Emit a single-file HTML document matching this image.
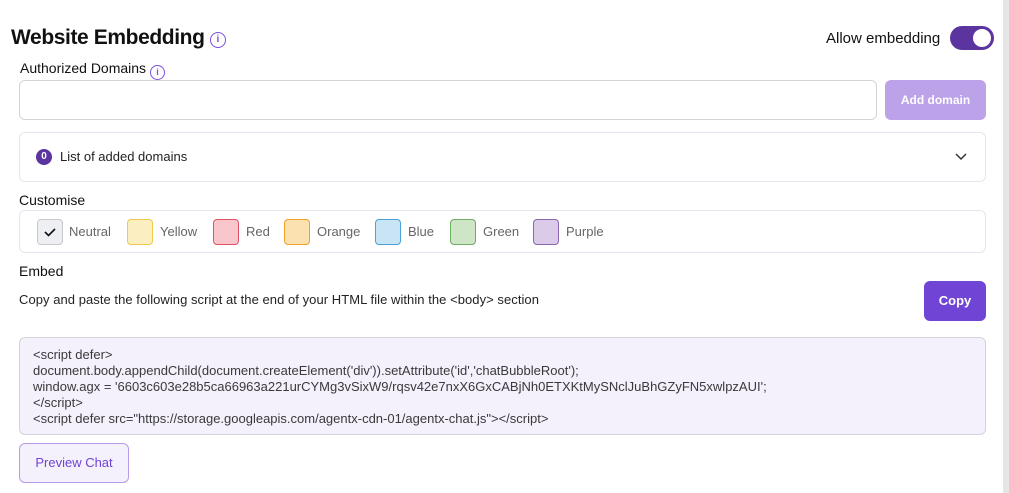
<!DOCTYPE html><html><head><style>
body{margin:0;width:1009px;height:493px;background:#fff;font-family:"Liberation Sans",sans-serif;position:relative;overflow:hidden;color:#1a1a2e}
.a{position:absolute}
.sb{right:0;top:0;width:6px;height:493px;background:#e6e6e6}
.info{display:inline-block;border:1.5px solid #7b4fd8;border-radius:50%;color:#7b4fd8;text-align:center;font-weight:bold;box-sizing:border-box}
.sw{position:absolute;top:219px;width:26px;height:26px;border-radius:4px;box-sizing:border-box;border:1px solid}
.lb{position:absolute;top:224px;font-size:13px;color:#666}
</style></head><body>
<div class="sb a"></div>
<div class="a" style="left:11px;top:26px;font-size:21px;font-weight:bold;color:#111;letter-spacing:-0.4px">Website Embedding <span class="info" style="width:16px;height:16px;font-size:10px;line-height:13px;vertical-align:2px;letter-spacing:0">i</span></div>
<div class="a" style="left:826px;top:30px;font-size:15px;color:#111">Allow embedding</div>
<div class="a" style="left:950px;top:26px;width:44px;height:24px;border-radius:12px;background:#5b34a0"><div class="a" style="right:3px;top:3px;width:18px;height:18px;border-radius:50%;background:#fff"></div></div>
<div class="a" style="left:20px;top:60px;font-size:14px;color:#111">Authorized Domains <span class="info" style="width:15px;height:15px;font-size:9px;line-height:12px;vertical-align:-2px">i</span></div>
<div class="a" style="left:19px;top:80px;width:858px;height:40px;border:1px solid #d4d4d8;border-radius:6px;box-sizing:border-box"></div>
<div class="a" style="left:885px;top:80px;width:101px;height:40px;background:#bca3e9;border-radius:6px;color:#fff;font-size:12px;font-weight:bold;text-align:center;line-height:40px">Add domain</div>
<div class="a" style="left:19px;top:132px;width:967px;height:50px;border:1px solid #e3e6ee;border-radius:6px;box-sizing:border-box"></div>
<div class="a" style="left:36px;top:149px;width:16px;height:16px;border-radius:50%;background:#5b34a0;color:#fff;font-size:10px;font-weight:bold;text-align:center;line-height:16px">0</div>
<div class="a" style="left:60px;top:149px;font-size:13px;color:#222">List of added domains</div>
<svg class="a" style="left:955px;top:151px" width="12" height="10"><path d="M1 3l5 5 5-5" fill="none" stroke="#333" stroke-width="1.5"/></svg>
<div class="a" style="left:19px;top:192px;font-size:14px;color:#111">Customise</div>
<div class="a" style="left:19px;top:210px;width:967px;height:43px;border:1px solid #e3e6ee;border-radius:6px;box-sizing:border-box"></div>
<div class="sw" style="left:37px;background:#eeeff2;border-color:#c8c8cc"><svg width="24" height="24"><path d="M7 12l3.5 3.5L17 9" fill="none" stroke="#111" stroke-width="1.6"/></svg></div>
<div class="lb" style="left:69px">Neutral</div>
<div class="sw" style="left:127px;background:#fbeec0;border-color:#f0c84a"></div><div class="lb" style="left:160px">Yellow</div>
<div class="sw" style="left:213px;background:#f8c6cb;border-color:#de5264"></div><div class="lb" style="left:246px">Red</div>
<div class="sw" style="left:284px;background:#fbe0b0;border-color:#efa12a"></div><div class="lb" style="left:317px">Orange</div>
<div class="sw" style="left:375px;background:#c9e4f4;border-color:#4aa3d8"></div><div class="lb" style="left:408px">Blue</div>
<div class="sw" style="left:450px;background:#cfe6c6;border-color:#6bb060"></div><div class="lb" style="left:483px">Green</div>
<div class="sw" style="left:533px;background:#dccbe8;border-color:#8a68b0"></div><div class="lb" style="left:566px">Purple</div>
<div class="a" style="left:19px;top:263px;font-size:14px;color:#111">Embed</div>
<div class="a" style="left:19px;top:292px;font-size:13px;color:#222;letter-spacing:0.05px">Copy and paste the following script at the end of your HTML file within the &lt;body&gt; section</div>
<div class="a" style="left:924px;top:281px;width:62px;height:40px;background:#7044d4;border-radius:6px;color:#fff;font-size:13px;font-weight:bold;text-align:center;line-height:40px">Copy</div>
<div class="a" style="left:19px;top:337px;width:967px;height:98px;background:#f4f0fc;border:1px solid #d4d4d8;border-radius:6px;box-sizing:border-box;padding:9px 13px;font-size:13px;line-height:16px;color:#3a3a3a;white-space:pre;overflow:hidden">&lt;script defer&gt;
document.body.appendChild(document.createElement('div')).setAttribute('id','chatBubbleRoot');
window.agx = '6603c603e28b5ca66963a221urCYMg3vSixW9/rqsv42e7nxX6GxCABjNh0ETXKtMySNclJuBhGZyFN5xwlpzAUI';
&lt;/script&gt;
&lt;script defer src="https://storage.googleapis.com/agentx-cdn-01/agentx-chat.js"&gt;&lt;/script&gt;</div>
<div class="a" style="left:19px;top:443px;width:110px;height:40px;background:#f4f0fc;border:1px solid #b99ae8;border-radius:6px;box-sizing:border-box;color:#7044d4;font-size:13px;text-align:center;line-height:38px">Preview Chat</div>
</body></html>
